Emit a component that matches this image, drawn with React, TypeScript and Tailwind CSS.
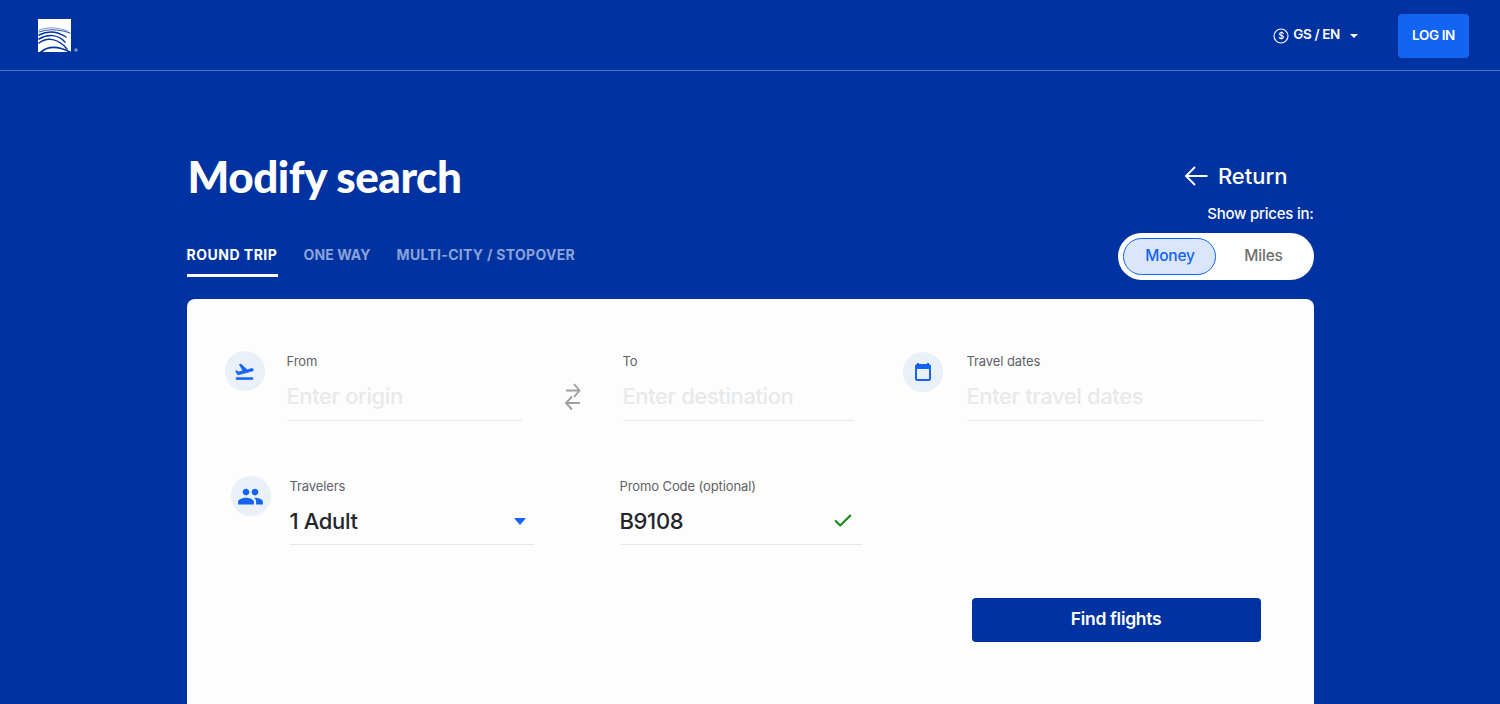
import { Check } from "lucide-react";
import { MdPeople } from "react-icons/md";

const sans = "font-['Inter','Liberation_Sans',sans-serif]";

function Logo() {
    return (
        <svg width="42" height="34" viewBox="0 0 42 34">
            <rect x="0" y="0" width="33" height="33" fill="#fff" />
            <g fill="none" stroke="#0033a1" strokeLinecap="round">
                <path d="M1 11 C9 8 18 8 30 12" strokeWidth="0.8" opacity="0.6" />
                <path d="M1 13 C9 10 20 10 32 14" strokeWidth="1.2" opacity="0.8" />
                <path d="M1 16 C9 12 19 12 28 18" strokeWidth="1.5" />
                <path d="M1 20 C9 15 20 15 27 23" strokeWidth="1.5" />
                <path d="M1 24 C9 18 20 19 29 30" strokeWidth="1.5" />
                <path d="M3 33 C10 27 20 27 32 33" strokeWidth="1.8" />
            </g>
            <circle cx="38" cy="31" r="1.8" fill="#6f8fd6" />
        </svg>
    );
}

function CircleIcon({ children, className }: { children: React.ReactNode; className: string }) {
    return (
        <div className={`flex h-10 w-10 shrink-0 items-center justify-center rounded-full bg-[#e9f0f8] text-[#1464f4] ${className}`}>
            {children}
        </div>
    );
}

function Field({
    label,
    value,
    placeholder,
    className,
    inputHeight = "h-[45px]",
    right,
}: {
    label: string;
    value?: string;
    placeholder?: string;
    className: string;
    inputHeight?: string;
    right?: React.ReactNode;
}) {
    return (
        <div className={`shrink-0 pt-[1px] ${className}`}>
            <div className="h-[18px] text-[13px] leading-[18px] tracking-[-0.1px] text-[#5f6368]">{label}</div>
            <div className={`mt-[6px] flex items-center justify-between border-b border-[#e6e7ea] pb-[3px] ${inputHeight}`}>
                {value ? (
                    <span className="text-[22px] font-medium tracking-[-0.35px] text-[#23262b]">{value}</span>
                ) : (
                    <span className="text-[22px] font-medium tracking-[-0.4px] text-[#e8e9ea]">{placeholder}</span>
                )}
                {right}
            </div>
        </div>
    );
}

export default function App() {
    return (
        <div className={`h-[704px] overflow-hidden bg-[#0033a1] ${sans}`}>
            <header className="flex h-[71px] items-center border-b border-[#4f74c8] pl-[38px] pr-[31px]">
                <div className="mt-[1px]">
                    <Logo />
                </div>
                <div className="ml-auto flex items-center text-[13.5px] font-semibold tracking-[-0.35px] text-white">
                    <svg width="16" height="16" viewBox="0 0 16 16" className="mr-[4px] mt-[1px]" fill="none" stroke="#fff">
                        <circle cx="8" cy="8" r="7" strokeWidth="1.1" />
                        <text x="8" y="11" textAnchor="middle" fontSize="8.5" fill="#fff" stroke="none">$</text>
                    </svg>
                    <span className="mb-[1px]">GS / EN</span>
                    <span className="ml-[10px] mt-[2px] h-0 w-0 border-x-[4px] border-t-[4px] border-x-transparent border-t-white" />
                </div>
                <button className="ml-[40px] mt-[1px] h-[44px] w-[71px] rounded-[4px] bg-[#1464f4] text-[13.5px] font-semibold tracking-[-0.35px] text-white">
                    LOG IN
                </button>
            </header>

            <main className="mx-auto w-[1127px]">
                <div className="flex items-start justify-between">
                    <div>
                        <h1 className="ml-[1px] mt-[77px] text-[44px] font-black leading-[56px] tracking-[-0.45px] text-white font-['Lato',sans-serif]">
                            Modify search
                        </h1>
                        <nav className="mt-[36px] flex text-[14px] font-bold">
                            <span className="h-[37px] w-[91px] whitespace-nowrap border-b-[3px] border-white pt-[4px] tracking-[0.5px] text-white">ROUND TRIP</span>
                            <span className="ml-[26px] whitespace-nowrap pt-[4px] tracking-[0.1px] text-[#8aa3d8]">ONE WAY</span>
                            <span className="ml-[26px] whitespace-nowrap pt-[4px] tracking-[0.3px] text-[#8aa3d8]">MULTI-CITY / STOPOVER</span>
                        </nav>
                    </div>
                    <div className="flex flex-col items-end">
                        <div className="mr-[26px] mt-[90px] flex items-center text-[22px] font-medium leading-[30px] text-white">
                            <svg width="24" height="20" viewBox="0 0 24 20" fill="none" stroke="currentColor" strokeWidth="1.9" className="mr-[10px]">
                                <path d="M23.5 10 H2 M11 1 L2 10 L11 19" />
                            </svg>
                            Return
                        </div>
                        <div className="mt-[13px] text-[15px] font-medium leading-[20px] tracking-[-0.25px] text-white">Show prices in:</div>
                        <div className="mt-[9px] flex h-[47px] w-[196px] items-center rounded-full bg-white pl-[5px] text-[15.5px] font-medium tracking-[-0.2px]">
                            <span className="flex h-[37px] w-[93px] items-center justify-center rounded-full border border-[#1464f4] bg-[#d9e6fb] pb-[1px] pl-[2px] text-[#1464f4]">
                                Money
                            </span>
                            <span className="mb-[1px] ml-[11px] w-[74px] text-center text-[#6e6e6e]">Miles</span>
                        </div>
                    </div>
                </div>

                <section className="mt-[19px] h-[420px] rounded-t-[8px] bg-[#fdfdfd]">
                    <div className="flex items-start pl-[38px] pt-[52px]">
                        <CircleIcon className="mt-0">
                            <svg width="21" height="21" viewBox="0 0 24 24" fill="currentColor" stroke="currentColor" strokeWidth="0.8">
                                <path d="M2.5 19h19v2h-19v-2zm19.57-9.36c-.21-.8-1.04-1.28-1.84-1.06L14.92 10l-6.9-6.43-1.93.51 4.14 7.17-4.97 1.33-1.97-1.54-1.45.39 2.59 4.49s7.12-1.9 16.57-4.43c.81-.23 1.28-1.05 1.07-1.85z" />
                            </svg>
                        </CircleIcon>
                        <Field label="From" placeholder="Enter origin" className="ml-[22px] w-[235px]" />
                        <div className="ml-[39px] mt-[32px] w-[24px] text-[#a0a0a0]">
                            <svg width="24" height="28" viewBox="0 0 24 28" fill="none" stroke="currentColor" strokeWidth="1.9">
                                <path d="M5 7.5 H18.5 M13 1 L18.5 7.5 L13 14" />
                                <path d="M19 20 H5 M11 13.5 L5 20 L11 26.5" />
                            </svg>
                        </div>
                        <Field label="To" placeholder="Enter destination" className="ml-[38px] w-[231px]" />
                        <CircleIcon className="ml-[49px] mt-[1px]">
                            <svg width="20" height="20" viewBox="0 0 20 20" fill="none">
                                <path d="M5 1 V4 M15 1 V4" stroke="currentColor" strokeWidth="2" />
                                <rect x="3" y="3" width="14" height="15" rx="1.5" stroke="currentColor" strokeWidth="2" />
                                <rect x="3" y="3" width="14" height="4" fill="currentColor" />
                            </svg>
                        </CircleIcon>
                        <Field label="Travel dates" placeholder="Enter travel dates" className="ml-[24px] w-[296px]" />
                    </div>
                    <div className="flex items-start pl-[44px] pt-[55px]">
                        <CircleIcon className="mt-0">
                            <MdPeople size={27} />
                        </CircleIcon>
                        <Field
                            label="Travelers"
                            value="1 Adult"
                            inputHeight="h-[44px]"
                            className="ml-[19px] w-[244px]"
                            right={<span className="mr-[8px] h-0 w-0 border-x-[6.5px] border-t-[7px] border-x-transparent border-t-[#1464f4]" />}
                        />
                        <Field
                            label="Promo Code (optional)"
                            value="B9108"
                            inputHeight="h-[44px]"
                            className="ml-[86px] w-[242px]"
                            right={<Check size={22} strokeWidth={2.2} className="mr-[8px] text-[#128a12]" />}
                        />
                    </div>
                    <div className="flex justify-end pr-[53px] pt-[53px]">
                        <button className="h-[44px] w-[289px] rounded-[4px] bg-[#0033a1] pb-[2px] text-[17.5px] font-semibold tracking-[-0.3px] text-white">
                            Find flights
                        </button>
                    </div>
                </section>
            </main>
        </div>
    );
}
